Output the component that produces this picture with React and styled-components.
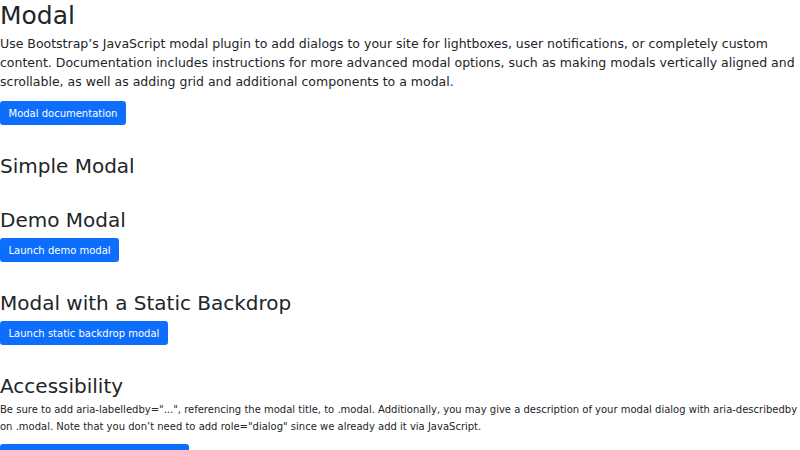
import styled, { createGlobalStyle } from "styled-components";

const GlobalStyle = createGlobalStyle`
	html, body {
		margin: 0;
		padding: 0;
		background: #fff;
	}
	body {
		font-family: "DejaVu Sans", sans-serif;
		font-size: 12.5px;
		line-height: 1.5;
		color: #212529;
	}
`;

const Page = styled.main`
	display: flex;
	flex-direction: column;
	align-items: flex-start;
`;

const Title = styled.h1`
	margin: 0 0 3px;
	font-size: 25px;
	font-weight: 400;
	line-height: 32px;
`;

const Section = styled.section`
	display: flex;
	flex-direction: column;
	align-items: flex-start;
	margin-top: ${(props) => props.gap || 0}px;
`;

const Heading = styled.h2`
	margin: 0 0 3.5px;
	font-size: 20px;
	font-weight: 400;
	line-height: 28.5px;
`;

const Text = styled.p`
	margin: 0 0 10px;
	font-size: 12.5px;
	line-height: 18.75px;
`;

const Note = styled.p`
	margin: -2px 0 9px;
	font-size: 10px;
	line-height: 16.5px;
`;

const Button = styled.button`
	display: inline-block;
	padding: 3.5px 7.5px;
	font-family: inherit;
	font-size: 10px;
	line-height: 15px;
	color: #fff;
	background: #0d6efd;
	border: 1px solid #0d6efd;
	border-radius: 2.5px;
	cursor: pointer;
`;

const App = () => {
	return (
		<>
			<GlobalStyle />
			<Page>
				<Title>Modal</Title>
				<Text>
					Use Bootstrap’s JavaScript modal plugin to add dialogs to your site for
					lightboxes, user notifications, or completely custom content.
					Documentation includes instructions for more advanced modal options,
					such as making modals vertically aligned and scrollable, as well as
					adding grid and additional components to a modal.
				</Text>
				<Button>Modal documentation</Button>

				<Section gap={27}>
					<Heading>Simple Modal</Heading>
				</Section>

				<Section gap={22}>
					<Heading>Demo Modal</Heading>
					<Button>Launch demo modal</Button>
				</Section>

				<Section gap={27}>
					<Heading>Modal with a Static Backdrop</Heading>
					<Button>Launch static backdrop modal</Button>
				</Section>

				<Section gap={27}>
					<Heading>Accessibility</Heading>
					<Note>
						Be sure to add aria-labelledby="...", referencing the modal title, to
						.modal. Additionally, you may give a description of your modal dialog
						with aria-describedby on .modal. Note that you don’t need to add
						role="dialog" since we already add it via JavaScript.
					</Note>
					<Button>Launch accessible modal example</Button>
				</Section>
			</Page>
		</>
	);
};

export default App;
